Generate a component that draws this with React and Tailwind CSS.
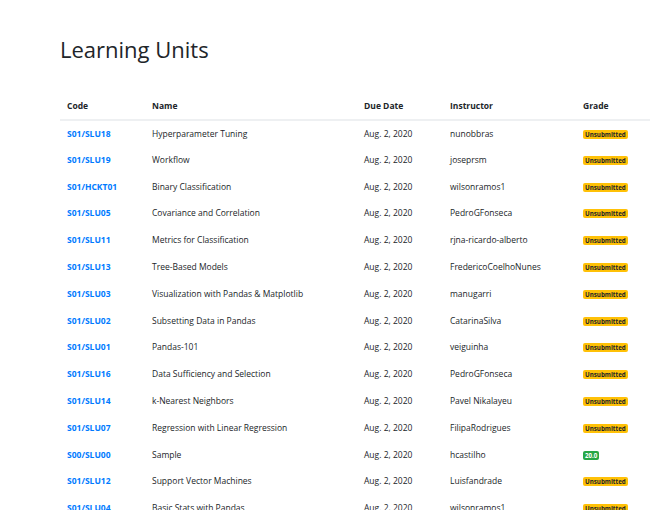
const units = [
  { code: 'S01/SLU18', name: 'Hyperparameter Tuning', instructor: 'nunobbras' },
  { code: 'S01/SLU19', name: 'Workflow', instructor: 'joseprsm' },
  { code: 'S01/HCKT01', name: 'Binary Classification', instructor: 'wilsonramos1' },
  { code: 'S01/SLU05', name: 'Covariance and Correlation', instructor: 'PedroGFonseca' },
  { code: 'S01/SLU11', name: 'Metrics for Classification', instructor: 'rjna-ricardo-alberto' },
  { code: 'S01/SLU13', name: 'Tree-Based Models', instructor: 'FredericoCoelhoNunes' },
  { code: 'S01/SLU03', name: 'Visualization with Pandas & Matplotlib', instructor: 'manugarri' },
  { code: 'S01/SLU02', name: 'Subsetting Data in Pandas', instructor: 'CatarinaSilva' },
  { code: 'S01/SLU01', name: 'Pandas-101', instructor: 'veiguinha' },
  { code: 'S01/SLU16', name: 'Data Sufficiency and Selection', instructor: 'PedroGFonseca' },
  { code: 'S01/SLU14', name: 'k-Nearest Neighbors', instructor: 'Pavel Nikalayeu' },
  { code: 'S01/SLU07', name: 'Regression with Linear Regression', instructor: 'FilipaRodrigues' },
  { code: 'S00/SLU00', name: 'Sample', instructor: 'hcastilho', grade: '20.0' },
  { code: 'S01/SLU12', name: 'Support Vector Machines', instructor: 'Luisfandrade' },
  { code: 'S01/SLU04', name: 'Basic Stats with Pandas', instructor: 'wilsonramos1' },
]

function GradeBadge({ grade }) {
  if (grade) {
    return (
      <span className="inline-block rounded-[2px] bg-[#28a745] px-[2px] text-[6.2px] font-bold leading-[9px] text-white">
        {grade}
      </span>
    )
  }
  return (
    <span className="inline-block rounded-[2px] bg-[#ffc107] px-[2px] text-[6.2px] font-bold leading-[9px] text-[#212529]">
      Unsubmitted
    </span>
  )
}

export default function App() {
  return (
    <div className="min-h-screen bg-white font-['Open_Sans',sans-serif] text-[#212529]">
      <div className="pl-[60px] pr-[8px] pt-[32px]">
        <h1 className="text-[22px] font-normal leading-[34px]">Learning Units</h1>

        <table className="mt-[27px] w-full table-fixed border-collapse text-[8.5px]">
          <colgroup>
            <col className="w-[85px]" />
            <col className="w-[212px]" />
            <col className="w-[86px]" />
            <col className="w-[133px]" />
            <col />
          </colgroup>
          <thead>
            <tr className="h-[27px] border-b-2 border-[#eef0f2] text-left">
              <th className="px-[7px] font-bold">Code</th>
              <th className="px-[7px] font-bold">Name</th>
              <th className="px-[7px] font-bold">Due Date</th>
              <th className="px-[7px] font-bold">Instructor</th>
              <th className="px-[7px] font-bold">Grade</th>
            </tr>
          </thead>
          <tbody>
            {units.map((u) => (
              <tr key={u.code} className="h-[26.8px]">
                <td className="px-[7px] font-bold text-[#007bff]">{u.code}</td>
                <td className="px-[7px]">{u.name}</td>
                <td className="px-[7px]">Aug. 2, 2020</td>
                <td className="px-[7px]">{u.instructor}</td>
                <td className="px-[7px]">
                  <GradeBadge grade={u.grade} />
                </td>
              </tr>
            ))}
          </tbody>
        </table>
      </div>
    </div>
  )
}
